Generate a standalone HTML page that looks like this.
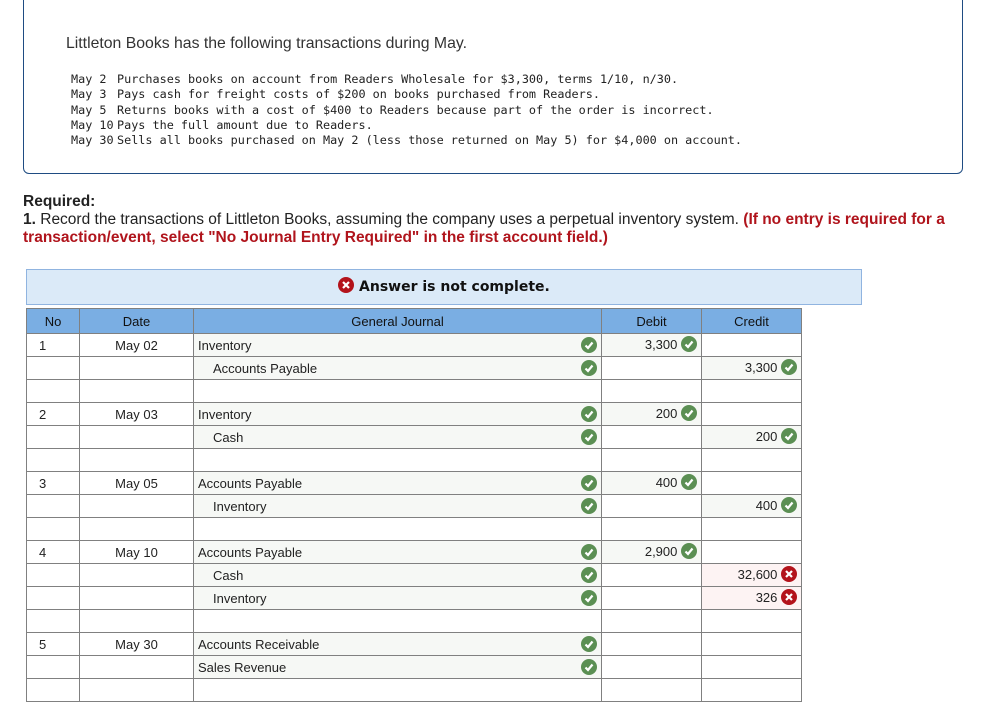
<!DOCTYPE html>
<html><head><meta charset="utf-8"><style>
body{margin:0;width:998px;height:720px;background:#fff;position:relative;overflow:hidden;font-family:"Liberation Sans",sans-serif;color:#222}
.box{position:absolute;left:23px;top:-10px;width:938px;height:182px;border:1.5px solid #1f4c82;border-radius:6px}
.title{position:absolute;left:66px;top:35px;font-size:15.8px;color:#333}
.mono{position:absolute;left:71px;top:72px;font-family:"DejaVu Sans Mono","Liberation Mono",monospace;font-size:11.8px;line-height:15.3px;color:#222;white-space:pre}
.mono div span{display:inline-block;width:46px}
.req{position:absolute;left:23px;top:193px;font-size:15.5px;line-height:18px;color:#222;width:960px}
.red{color:#b0141c;font-weight:bold}
.banner{position:absolute;left:26px;top:269px;width:834px;height:34px;border:1px solid #90b4e0;background:#dbeaf8;text-align:center;font-weight:bold;font-size:14px;line-height:35px;font-family:"DejaVu Sans",sans-serif;color:#111}
table{position:absolute;left:26px;top:308px;border-collapse:collapse;font-size:13px}
td,th{border:1.5px solid #808080;height:21px;padding:0;box-sizing:border-box}
th{background:#7aaee3;font-weight:normal;height:25px;color:#111}
tr{height:23px}
.c{text-align:center}
.g{background:#f6f8f5}
.w{background:#fdf3f3}
.r{text-align:right;padding-right:4px}
.ck,.x{display:inline-block;width:16px;height:16px;border-radius:50%;vertical-align:middle;position:relative;top:-1px}
.ck{background:#5b8f53}.x{background:#b3131b}
.ck svg,.x svg{position:absolute;left:0;top:0}
.gj{position:relative}
.gj .ck{position:absolute;right:4px;top:3px}
</style></head><body>
<div class="box"></div>
<div class="title">Littleton Books has the following transactions during May.</div>
<div class="mono"><div><span>May 2</span>Purchases books on account from Readers Wholesale for $3,300, terms 1/10, n/30.</div><div><span>May 3</span>Pays cash for freight costs of $200 on books purchased from Readers.</div><div><span>May 5</span>Returns books with a cost of $400 to Readers because part of the order is incorrect.</div><div><span>May 10</span>Pays the full amount due to Readers.</div><div><span>May 30</span>Sells all books purchased on May 2 (less those returned on May 5) for $4,000 on account.</div></div>
<div class="req"><b>Required:</b><br><b>1.</b> Record the transactions of Littleton Books, assuming the company uses a perpetual inventory system. <span class="red">(If no entry is required for a transaction/event, select "No Journal Entry Required" in the first account field.)</span></div>
<div class="banner"><span class="x" style="top:-2px"><svg width="16" height="16"><path d="M5 5L11 11M11 5L5 11" stroke="#fff" stroke-width="2.2"/></svg></span> Answer is not complete.</div>
<table>
<colgroup><col style="width:53px"><col style="width:114px"><col style="width:408px"><col style="width:100px"><col style="width:100px"></colgroup>
<tr style="height:25px"><th>No</th><th>Date</th><th>General Journal</th><th>Debit</th><th>Credit</th></tr>
<tr><td style="padding-left:12px">1</td><td class="c">May 02</td><td class="g gj" style="padding-left:4px">Inventory<span class="ck"><svg width="16" height="16"><path d="M4.5 8.5L7 11L11.5 5.5" stroke="#fff" stroke-width="2.2" fill="none"/></svg></span></td><td class="g r">3,300 <span class="ck"><svg width="16" height="16"><path d="M4.5 8.5L7 11L11.5 5.5" stroke="#fff" stroke-width="2.2" fill="none"/></svg></span></td><td></td></tr>
<tr><td></td><td></td><td class="g gj" style="padding-left:19px">Accounts Payable<span class="ck"><svg width="16" height="16"><path d="M4.5 8.5L7 11L11.5 5.5" stroke="#fff" stroke-width="2.2" fill="none"/></svg></span></td><td></td><td class="g r">3,300 <span class="ck"><svg width="16" height="16"><path d="M4.5 8.5L7 11L11.5 5.5" stroke="#fff" stroke-width="2.2" fill="none"/></svg></span></td></tr>
<tr><td></td><td></td><td></td><td></td><td></td></tr>
<tr><td style="padding-left:12px">2</td><td class="c">May 03</td><td class="g gj" style="padding-left:4px">Inventory<span class="ck"><svg width="16" height="16"><path d="M4.5 8.5L7 11L11.5 5.5" stroke="#fff" stroke-width="2.2" fill="none"/></svg></span></td><td class="g r">200 <span class="ck"><svg width="16" height="16"><path d="M4.5 8.5L7 11L11.5 5.5" stroke="#fff" stroke-width="2.2" fill="none"/></svg></span></td><td></td></tr>
<tr><td></td><td></td><td class="g gj" style="padding-left:19px">Cash<span class="ck"><svg width="16" height="16"><path d="M4.5 8.5L7 11L11.5 5.5" stroke="#fff" stroke-width="2.2" fill="none"/></svg></span></td><td></td><td class="g r">200 <span class="ck"><svg width="16" height="16"><path d="M4.5 8.5L7 11L11.5 5.5" stroke="#fff" stroke-width="2.2" fill="none"/></svg></span></td></tr>
<tr><td></td><td></td><td></td><td></td><td></td></tr>
<tr><td style="padding-left:12px">3</td><td class="c">May 05</td><td class="g gj" style="padding-left:4px">Accounts Payable<span class="ck"><svg width="16" height="16"><path d="M4.5 8.5L7 11L11.5 5.5" stroke="#fff" stroke-width="2.2" fill="none"/></svg></span></td><td class="g r">400 <span class="ck"><svg width="16" height="16"><path d="M4.5 8.5L7 11L11.5 5.5" stroke="#fff" stroke-width="2.2" fill="none"/></svg></span></td><td></td></tr>
<tr><td></td><td></td><td class="g gj" style="padding-left:19px">Inventory<span class="ck"><svg width="16" height="16"><path d="M4.5 8.5L7 11L11.5 5.5" stroke="#fff" stroke-width="2.2" fill="none"/></svg></span></td><td></td><td class="g r">400 <span class="ck"><svg width="16" height="16"><path d="M4.5 8.5L7 11L11.5 5.5" stroke="#fff" stroke-width="2.2" fill="none"/></svg></span></td></tr>
<tr><td></td><td></td><td></td><td></td><td></td></tr>
<tr><td style="padding-left:12px">4</td><td class="c">May 10</td><td class="g gj" style="padding-left:4px">Accounts Payable<span class="ck"><svg width="16" height="16"><path d="M4.5 8.5L7 11L11.5 5.5" stroke="#fff" stroke-width="2.2" fill="none"/></svg></span></td><td class="g r">2,900 <span class="ck"><svg width="16" height="16"><path d="M4.5 8.5L7 11L11.5 5.5" stroke="#fff" stroke-width="2.2" fill="none"/></svg></span></td><td></td></tr>
<tr><td></td><td></td><td class="g gj" style="padding-left:19px">Cash<span class="ck"><svg width="16" height="16"><path d="M4.5 8.5L7 11L11.5 5.5" stroke="#fff" stroke-width="2.2" fill="none"/></svg></span></td><td></td><td class="w r">32,600 <span class="x"><svg width="16" height="16"><path d="M5 5L11 11M11 5L5 11" stroke="#fff" stroke-width="2.2"/></svg></span></td></tr>
<tr><td></td><td></td><td class="g gj" style="padding-left:19px">Inventory<span class="ck"><svg width="16" height="16"><path d="M4.5 8.5L7 11L11.5 5.5" stroke="#fff" stroke-width="2.2" fill="none"/></svg></span></td><td></td><td class="w r">326 <span class="x"><svg width="16" height="16"><path d="M5 5L11 11M11 5L5 11" stroke="#fff" stroke-width="2.2"/></svg></span></td></tr>
<tr><td></td><td></td><td></td><td></td><td></td></tr>
<tr><td style="padding-left:12px">5</td><td class="c">May 30</td><td class="g gj" style="padding-left:4px">Accounts Receivable<span class="ck"><svg width="16" height="16"><path d="M4.5 8.5L7 11L11.5 5.5" stroke="#fff" stroke-width="2.2" fill="none"/></svg></span></td><td></td><td></td></tr>
<tr><td></td><td></td><td class="g gj" style="padding-left:4px">Sales Revenue<span class="ck"><svg width="16" height="16"><path d="M4.5 8.5L7 11L11.5 5.5" stroke="#fff" stroke-width="2.2" fill="none"/></svg></span></td><td></td><td></td></tr>
<tr><td></td><td></td><td></td><td></td><td></td></tr>
</table>
</body></html>
